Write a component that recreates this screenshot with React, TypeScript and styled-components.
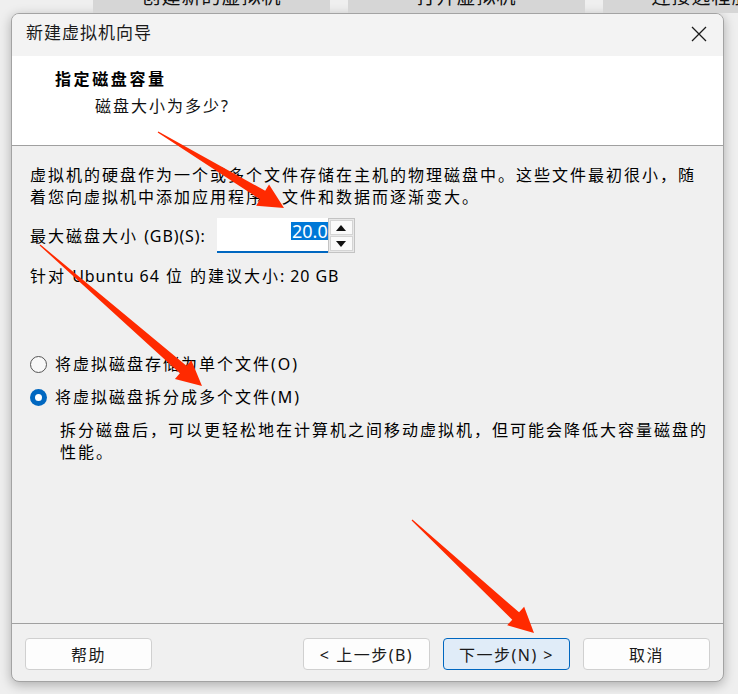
import * as React from 'react';
import styled, { createGlobalStyle } from 'styled-components';

const GlobalStyle = createGlobalStyle`
  html, body {
    margin: 0;
    padding: 0;
    background: #efefef;
  }
  body {
    font-family: "Noto Sans", "Noto Sans CJK SC", sans-serif;
    color: #000;
  }
`;

const Page = styled.div`
  position: relative;
  width: 738px;
  height: 694px;
  overflow: hidden;
  background: #efefef;
`;

const TabStrip = styled.div`
  display: flex;
  gap: 18px;
  height: 13px;
  padding-left: 93px;
`;

const Tab = styled.div`
  flex: 0 0 237px;
  display: flex;
  justify-content: center;
  align-items: flex-start;
  overflow: hidden;
  background: #d6d6d6;
  font-size: 19px;
  line-height: 20px;
  letter-spacing: 1px;
  color: #111;
`;

const TabText = styled.span`
  margin-top: -13px;
  white-space: nowrap;
`;

const Dialog = styled.div`
  display: flex;
  flex-direction: column;
  width: 713px;
  height: 669px;
  margin-left: 11px;
  box-sizing: border-box;
  border: 1px solid #a3a3a3;
  border-radius: 8px;
  overflow: hidden;
  background: #f0f0f0;
  box-shadow: 0 3px 12px rgba(0, 0, 0, 0.28);
`;

const TitleBar = styled.div`
  display: flex;
  align-items: center;
  height: 42px;
  padding-left: 14px;
  background: #f3f3f3;
`;

const Title = styled.div`
  flex: 1;
  padding-bottom: 7px;
  font-family: "Noto Sans CJK SC", sans-serif;
  font-size: 17px;
  letter-spacing: 1px;
  color: #1a1a1a;
`;

const CloseButton = styled.div`
  display: flex;
  align-items: center;
  justify-content: center;
  width: 48px;
  height: 42px;
  padding-bottom: 2px;
  box-sizing: border-box;
`;

const Header = styled.div`
  height: 89px;
  box-sizing: content-box;
  padding-left: 43px;
  background: #fff;
  border-bottom: 1px solid #a0a0a0;
`;

const HeaderTitle = styled.div`
  padding-top: 11px;
  font-family: "Noto Sans CJK SC", sans-serif;
  font-size: 16px;
  font-weight: 700;
  line-height: 22px;
  letter-spacing: 2.6px;
`;

const HeaderSub = styled.div`
  margin-top: 6px;
  padding-left: 40px;
  font-size: 16px;
  line-height: 22px;
  letter-spacing: 2px;
  color: #111;
`;

const Body = styled.div`
  flex: 1;
  display: flex;
  flex-direction: column;
  padding: 18px 18px 0;
  font-size: 16px;
  line-height: 22px;
  letter-spacing: 2px;
`;

const Latin = styled.span`
  letter-spacing: 0.9px;
`;

const Paragraph = styled.div<{ $indent?: number; $gap?: number }>`
  margin-top: ${(p) => p.$gap ?? 0}px;
  padding-left: ${(p) => p.$indent ?? 0}px;
  white-space: nowrap;
`;

const SizeRow = styled.div`
  display: flex;
  align-items: center;
  gap: 11px;
  margin-top: 10px;
`;

const Label = styled.span`
  white-space: nowrap;
`;

const Spin = styled.div`
  display: flex;
  height: 35px;
`;

const SpinInput = styled.div`
  display: flex;
  justify-content: flex-end;
  align-items: flex-start;
  width: 111px;
  box-sizing: border-box;
  padding-top: 4px;
  background: #fff;
  border-bottom: 2px solid #0067c0;
`;

const Selected = styled.span`
  background: #0078d7;
  color: #fff;
  font-size: 18px;
  line-height: 18px;
  letter-spacing: 0;
  padding: 0 0 0 1px;
`;

const SpinButtons = styled.div`
  display: flex;
  flex-direction: column;
  gap: 1px;
  width: 27px;
  box-sizing: border-box;
  padding: 1px;
  border: 1px solid #c3c3c3;
  background: #e8e8e8;
`;

const SpinButton = styled.div`
  flex: 1;
  display: flex;
  align-items: center;
  justify-content: center;
  background: #fafafa;
  border: 1px solid #d4d4d4;
`;

const RadioRow = styled.label<{ $gap: number }>`
  display: flex;
  align-items: center;
  gap: 8px;
  margin-top: ${(p) => p.$gap}px;
  line-height: 26px;
  white-space: nowrap;
`;

const RadioCircle = styled.span<{ $checked?: boolean }>`
  position: relative;
  width: 17px;
  height: 17px;
  box-sizing: border-box;
  border-radius: 50%;
  border: ${(p) => (p.$checked ? 'none' : '1.5px solid #555')};
  background: ${(p) => (p.$checked ? '#0067c0' : '#f8f8f8')};
  &::after {
    content: '';
    display: ${(p) => (p.$checked ? 'block' : 'none')};
    position: absolute;
    left: 5px;
    top: 5px;
    width: 7px;
    height: 7px;
    border-radius: 50%;
    background: #fff;
  }
`;

const Footer = styled.div`
  display: flex;
  gap: 13px;
  padding: 14px 13px 11px;
  border-top: 1px solid #a0a0a0;
`;

const Spacer = styled.div`
  flex: 1;
`;

const Button = styled.div<{ $primary?: boolean }>`
  display: flex;
  align-items: center;
  justify-content: center;
  width: 127px;
  height: 32px;
  box-sizing: border-box;
  border-radius: 4px;
  border: 1px solid ${(p) => (p.$primary ? '#0067c0' : '#d0d0d0')};
  background: ${(p) => (p.$primary ? '#e0ecf8' : '#fdfdfd')};
  font-size: 16px;
  letter-spacing: 1.5px;
  color: #1a1a1a;
  white-space: nowrap;
`;

const ArrowLayer = styled.svg`
  position: absolute;
  left: 0;
  top: 0;
  pointer-events: none;
`;

type Pt = [number, number];

function arrowPoints(tail: Pt, tip: Pt): string {
  const [tx, ty] = tail;
  const [px, py] = tip;
  const len = Math.hypot(px - tx, py - ty);
  const ux = (px - tx) / len;
  const uy = (py - ty) / len;
  const nx = -uy;
  const ny = ux;
  const head = 25;
  const headW = 12.5;
  const shaftW = 5;
  const tailW = 0.6;
  const bx = px - ux * head;
  const by = py - uy * head;
  const pts: Pt[] = [
    [tx + nx * tailW, ty + ny * tailW],
    [bx + nx * shaftW, by + ny * shaftW],
    [bx + nx * headW, by + ny * headW],
    [px, py],
    [bx - nx * headW, by - ny * headW],
    [bx - nx * shaftW, by - ny * shaftW],
    [tx - nx * tailW, ty - ny * tailW],
  ];
  return pts.map((p) => p.join(',')).join(' ');
}

const arrows: [Pt, Pt][] = [
  [[158, 132], [284, 208]],
  [[40, 245], [202, 386]],
  [[412, 520], [534, 633]],
];

export default function App() {
  return (
    <Page>
      <GlobalStyle />
      <TabStrip>
        <Tab><TabText>创建新的虚拟机</TabText></Tab>
        <Tab><TabText>打开虚拟机</TabText></Tab>
        <Tab><TabText>连接远程服务器</TabText></Tab>
      </TabStrip>
      <Dialog>
        <TitleBar>
          <Title>新建虚拟机向导</Title>
          <CloseButton>
            <svg width="16" height="16" viewBox="0 0 16 16">
              <path d="M1 1 L15 15 M15 1 L1 15" stroke="#1a1a1a" strokeWidth="1.3" fill="none" />
            </svg>
          </CloseButton>
        </TitleBar>
        <Header>
          <HeaderTitle>指定磁盘容量</HeaderTitle>
          <HeaderSub>磁盘大小为多少?</HeaderSub>
        </Header>
        <Body>
          <Paragraph>
            虚拟机的硬盘作为一个或多个文件存储在主机的物理磁盘中。这些文件最初很小，随
            <br />
            着您向虚拟机中添加应用程序、文件和数据而逐渐变大。
          </Paragraph>
          <SizeRow>
            <Label>
              最大磁盘大小 <Latin>(GB)(S):</Latin>
            </Label>
            <Spin>
              <SpinInput>
                <Selected>20.0</Selected>
              </SpinInput>
              <SpinButtons>
                <SpinButton>
                  <svg width="10" height="6" viewBox="0 0 10 6">
                    <path d="M0 6 L5 0 L10 6 Z" fill="#111" />
                  </svg>
                </SpinButton>
                <SpinButton>
                  <svg width="10" height="6" viewBox="0 0 10 6">
                    <path d="M0 0 L10 0 L5 6 Z" fill="#111" />
                  </svg>
                </SpinButton>
              </SpinButtons>
            </Spin>
          </SizeRow>
          <Paragraph $gap={12}>
            针对 <Latin>Ubuntu 64</Latin> 位 的建议大小<Latin>: 20 GB</Latin>
          </Paragraph>
          <RadioRow $gap={64}>
            <RadioCircle />
            将虚拟磁盘存储为单个文件(O)
          </RadioRow>
          <RadioRow $gap={7}>
            <RadioCircle $checked />
            将虚拟磁盘拆分成多个文件(M)
          </RadioRow>
          <Paragraph $indent={30} $gap={9}>
            拆分磁盘后，可以更轻松地在计算机之间移动虚拟机，但可能会降低大容量磁盘的
            <br />
            性能。
          </Paragraph>
        </Body>
        <Footer>
          <Button>帮助</Button>
          <Spacer />
          <Button>&lt; 上一步(B)</Button>
          <Button $primary>下一步(N) &gt;</Button>
          <Button>取消</Button>
        </Footer>
      </Dialog>
      <ArrowLayer width="738" height="694" viewBox="0 0 738 694">
        {arrows.map(([tail, tip], i) => (
          <polygon key={i} points={arrowPoints(tail, tip)} fill="#ff2a00" />
        ))}
      </ArrowLayer>
    </Page>
  );
}
